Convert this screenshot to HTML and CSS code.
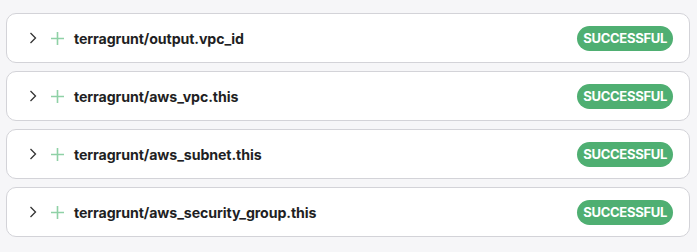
FILE: index.html
```html
<!DOCTYPE html>
<html>
<head>
<meta charset="utf-8">
<link rel="stylesheet" href="styles.css">
</head>
<body>
<div class="list">
  <div class="row">
    <svg class="chev" width="8" height="12" viewBox="0 0 8 12"><path d="M1.5 1 L6.5 6 L1.5 11" fill="none" stroke="#333" stroke-width="1.3"/></svg>
    <svg class="plus" width="13" height="13" viewBox="0 0 13 13"><path d="M6.5 0 V13 M0 6.5 H13" stroke="#8fd1a6" stroke-width="1.6"/></svg>
    <span class="name">terragrunt/output.vpc_id</span>
    <span class="badge">SUCCESSFUL</span>
  </div>
  <div class="row">
    <svg class="chev" width="8" height="12" viewBox="0 0 8 12"><path d="M1.5 1 L6.5 6 L1.5 11" fill="none" stroke="#333" stroke-width="1.3"/></svg>
    <svg class="plus" width="13" height="13" viewBox="0 0 13 13"><path d="M6.5 0 V13 M0 6.5 H13" stroke="#8fd1a6" stroke-width="1.6"/></svg>
    <span class="name">terragrunt/aws_vpc.this</span>
    <span class="badge">SUCCESSFUL</span>
  </div>
  <div class="row">
    <svg class="chev" width="8" height="12" viewBox="0 0 8 12"><path d="M1.5 1 L6.5 6 L1.5 11" fill="none" stroke="#333" stroke-width="1.3"/></svg>
    <svg class="plus" width="13" height="13" viewBox="0 0 13 13"><path d="M6.5 0 V13 M0 6.5 H13" stroke="#8fd1a6" stroke-width="1.6"/></svg>
    <span class="name">terragrunt/aws_subnet.this</span>
    <span class="badge">SUCCESSFUL</span>
  </div>
  <div class="row">
    <svg class="chev" width="8" height="12" viewBox="0 0 8 12"><path d="M1.5 1 L6.5 6 L1.5 11" fill="none" stroke="#333" stroke-width="1.3"/></svg>
    <svg class="plus" width="13" height="13" viewBox="0 0 13 13"><path d="M6.5 0 V13 M0 6.5 H13" stroke="#8fd1a6" stroke-width="1.6"/></svg>
    <span class="name">terragrunt/aws_security_group.this</span>
    <span class="badge">SUCCESSFUL</span>
  </div>
</div>
</body>
</html>
```
FILE: styles.css
```css
html, body {
  margin: 0;
  padding: 0;
  background: #f6f6f8;
}
body {
  font-family: Inter, "Noto Sans", sans-serif;
}
.list {
  padding: 13px 7px 0 6px;
  display: flex;
  flex-direction: column;
  gap: 8px;
}
.row {
  box-sizing: border-box;
  height: 50px;
  background: #fff;
  border: 1px solid #d3d3d8;
  border-radius: 10px;
  display: flex;
  align-items: center;
  padding: 0 16px 0 22px;
}
.chev {
  flex: none;
}
.plus {
  flex: none;
  margin-left: 14px;
}
.name {
  margin-left: 10px;
  font-size: 14.2px;
  font-weight: 700;
  color: #1f1f24;
  letter-spacing: -0.1px;
}
.badge {
  margin-left: auto;
  background: #4faf72;
  color: #fff;
  font-size: 13px;
  font-weight: 700;
  border-radius: 13px;
  height: 25px;
  line-height: 25px;
  padding: 0 6px;
  letter-spacing: -0.3px;
}
```
